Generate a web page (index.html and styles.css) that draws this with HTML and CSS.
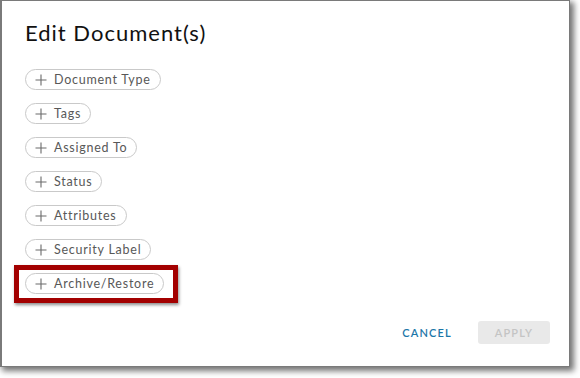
FILE: index.html
```html
<!DOCTYPE html>
<html>
<head>
<meta charset="utf-8">
<link rel="stylesheet" href="styles.css">
</head>
<body>
<div class="dialog">
  <h1 class="title">Edit Document(s)</h1>
  <div class="chips">
    <span class="chip"><svg class="plus" viewBox="0 0 12 12"><path d="M6 0.5V11.5M0.5 6H11.5"/></svg>Document Type</span>
    <span class="chip"><svg class="plus" viewBox="0 0 12 12"><path d="M6 0.5V11.5M0.5 6H11.5"/></svg>Tags</span>
    <span class="chip"><svg class="plus" viewBox="0 0 12 12"><path d="M6 0.5V11.5M0.5 6H11.5"/></svg>Assigned To</span>
    <span class="chip"><svg class="plus" viewBox="0 0 12 12"><path d="M6 0.5V11.5M0.5 6H11.5"/></svg>Status</span>
    <span class="chip"><svg class="plus" viewBox="0 0 12 12"><path d="M6 0.5V11.5M0.5 6H11.5"/></svg>Attributes</span>
    <span class="chip"><svg class="plus" viewBox="0 0 12 12"><path d="M6 0.5V11.5M0.5 6H11.5"/></svg>Security Label</span>
    <span class="chip highlighted"><svg class="plus" viewBox="0 0 12 12"><path d="M6 0.5V11.5M0.5 6H11.5"/></svg>Archive/Restore<span class="callout"></span></span>
  </div>
  <div class="footer">
    <button class="btn-link">CANCEL</button>
    <button class="btn-disabled">APPLY</button>
  </div>
</div>
</body>
</html>
```

FILE: styles.css
```css
html, body {
  margin: 0;
  padding: 0;
  background: #ffffff;
}
body {
  width: 580px;
  height: 378px;
  overflow: hidden;
  font-family: "Lato", "Noto Sans", sans-serif;
}
.dialog {
  box-sizing: border-box;
  width: 570px;
  height: 367px;
  border: 1px solid #7a7a7a;
  border-left-width: 2px;
  background: #fff;
  box-shadow: 3px 3px 6px 1px rgba(0,0,0,0.55);
  display: flex;
  flex-direction: column;
  padding: 19px 19px 22px 23px;
}
.title {
  margin: 0;
  font-weight: 400;
  font-size: 22px;
  line-height: 26px;
  color: #111;
  letter-spacing: 1px;
}
.chips {
  margin-top: 23px;
  display: flex;
  flex-direction: column;
  align-items: flex-start;
  gap: 13px;
}
.chip {
  position: relative;
  box-sizing: border-box;
  height: 21px;
  display: inline-flex;
  align-items: center;
  border: 1px solid #c9c9c9;
  border-radius: 11px;
  padding: 0 9px 0 9px;
  font-size: 12.5px;
  letter-spacing: 0.75px;
  color: #585858;
}
.plus {
  width: 12px;
  height: 12px;
  margin-right: 7px;
  fill: none;
  stroke: #6a6a6a;
  stroke-width: 1.1;
}
.callout {
  position: absolute;
  left: -12px;
  top: -9px;
  width: 164px;
  height: 38px;
  box-sizing: border-box;
  border: 5px solid #a30000;
  box-shadow: 1px 2px 3px rgba(0,0,0,0.45);
}
.footer {
  margin-top: auto;
  display: flex;
  justify-content: flex-end;
  align-items: center;
  gap: 26px;
}
.btn-link, .btn-disabled {
  font-family: "Lato", "Noto Sans", sans-serif;
  font-size: 11px;
  font-weight: 600;
  letter-spacing: 1.2px;
  border: none;
  cursor: default;
}
.btn-link {
  background: none;
  color: #1b76a8;
  padding: 0;
}
.btn-disabled {
  background: #e9e9e9;
  color: #c4c4c4;
  width: 72px;
  height: 23px;
  border-radius: 3px;
  padding: 0;
}
```
